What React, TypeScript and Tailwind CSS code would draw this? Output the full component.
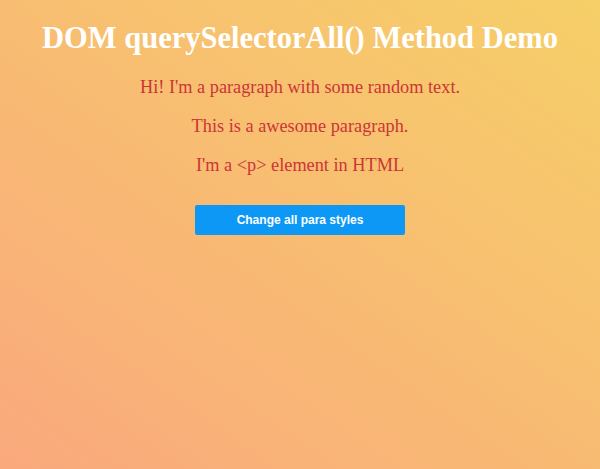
export default function App() {
  const paras = [
    "Hi! I'm a paragraph with some random text.",
    'This is a awesome paragraph.',
    "I'm a <p> element in HTML",
  ]

  return (
    <div className="min-h-[469px] bg-[linear-gradient(35deg,#faa97d,#f6cf68)] text-center font-['Liberation_Serif',serif] pt-[20px]">
      <h1 className="text-[30.5px] leading-[37px] font-bold text-white">DOM querySelectorAll() Method Demo</h1>
      <div className="mt-[20px]">
        {paras.map(p => (
          <p key={p} className="text-[18.3px] leading-[21px] text-[#cc3538] mb-[18px]">
            {p}
          </p>
        ))}
      </div>
      <button className="mt-[11px] w-[210px] h-[30px] rounded-[2px] bg-[#0d98f6] text-white text-[12px] font-bold font-['Liberation_Sans',sans-serif]">
        Change all para styles
      </button>
    </div>
  )
}
